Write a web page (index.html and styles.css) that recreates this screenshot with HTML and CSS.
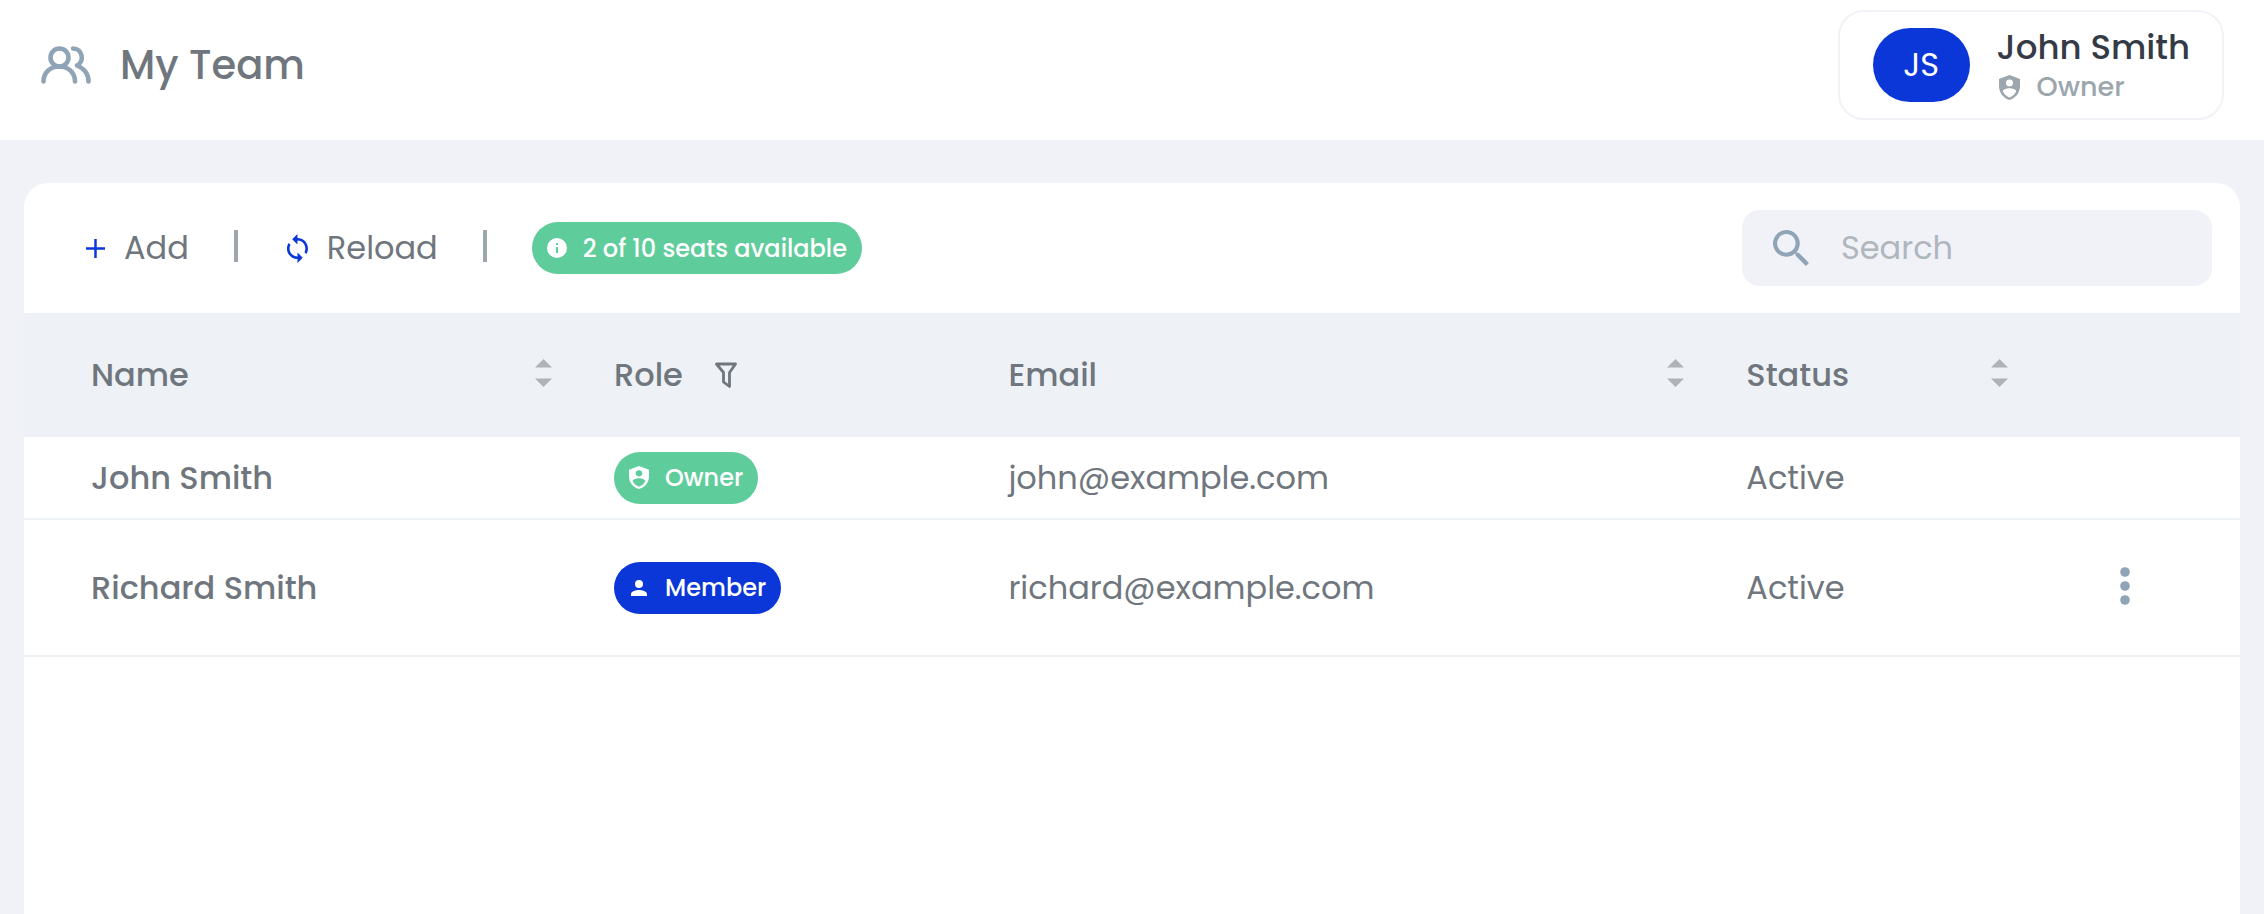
FILE: index.html
```html
<!DOCTYPE html>
<html lang="en">
<head>
<meta charset="utf-8">
<meta name="viewport" content="width=device-width, initial-scale=1">
<title>My Team</title>
<link rel="stylesheet" href="styles.css">
</head>
<body>
<svg class="sprite" aria-hidden="true">
  <symbol id="shield" viewBox="3 1 18 22" preserveAspectRatio="none"><path fill-rule="evenodd" d="M12 1 3 4.500v6.500c0 5.550 3.840 10.740 9 12 5.160-1.260 9-6.450 9-12V4.500Zm0 4a3 3 0 1 1 0 6 3 3 0 0 1 0-6Zm0 7.700c2.300 0 5.700 1 5.700 2.900-1.300 2.500-3.300 4.400-5.700 5.200-2.400-.8-4.400-2.700-5.700-5.200 0-1.900 3.400-2.900 5.700-2.900Z"/></symbol>
  <symbol id="sort" viewBox="0 0 17 28"><path d="M8.500 0 17 8.500H0ZM8.500 28 0 19.500h17Z"/></symbol>
</svg>
<header class="topbar">
  <div class="heading">
    <svg class="heading-icon" viewBox="0 0 50 38" fill="none" stroke="currentColor" stroke-width="4.600" stroke-linecap="round" stroke-linejoin="round"><circle cx="18.500" cy="11.500" r="9"/><path d="M2.500 35.500c0-20 31.500-20 31.500 0M32 2.500c9.500 0 12 13 4 17C42 22 47.500 27 47.500 35.500"/></svg>
    <h1 class="title">My Team</h1>
  </div>
  <button class="profile" type="button">
    <span class="avatar">JS</span>
    <span class="profile-text">
      <span class="profile-name">John Smith</span>
      <span class="profile-role"><svg class="profile-shield"><use href="#shield"/></svg>Owner</span>
    </span>
  </button>
</header>
<main class="content">
  <section class="panel">
    <div class="toolbar">
      <div class="actions">
        <button class="action" type="button"><svg class="plus" viewBox="0 0 20 20"><path d="M10 0v20M0 10h20" stroke="currentColor" stroke-width="2.600"/></svg>Add</button>
        <span class="divider"></span>
        <button class="action" type="button"><svg class="reload" viewBox="1 1 19 22"><path d="M12 4V1L8 5l4 4V6c3.310 0 6 2.690 6 6 0 1.010-.25 1.970-.7 2.800l1.460 1.460C19.540 15.030 20 13.570 20 12c0-4.420-3.580-8-8-8zm0 14c-3.310 0-6-2.690-6-6 0-1.010.25-1.970.7-2.800L5.240 7.740C4.460 8.970 4 10.430 4 12c0 4.420 3.580 8 8 8v3l4-4-4-4v3z"/></svg>Reload</button>
        <span class="divider"></span>
        <span class="badge badge-green"><svg class="badge-icon" viewBox="2 2 20 20"><path fill-rule="evenodd" d="M12 2a10 10 0 1 0 0 20 10 10 0 0 0 0-20Zm-1 5h2v2h-2Zm0 4h2v6h-2Z"/></svg>2 of 10 seats available</span>
      </div>
      <label class="search">
        <svg class="search-icon" viewBox="3 3 17.500 17.500"><path d="M15.500 14h-.79l-.28-.27A6.470 6.470 0 0 0 16 9.500 6.500 6.500 0 1 0 9.500 16c1.610 0 3.090-.59 4.230-1.570l.27.28v.79l5 4.990L20.490 19zm-6 0C7.010 14 5 11.990 5 9.500S7.010 5 9.500 5 14 7.010 14 9.500 11.990 14 9.500 14z"/></svg>
        <input class="search-input" type="search" placeholder="Search" aria-label="Search">
      </label>
    </div>
    <table class="team">
      <colgroup><col class="c-name"><col class="c-role"><col class="c-email"><col class="c-status"><col></colgroup>
      <thead>
        <tr>
          <th><div class="head">Name<svg class="sort"><use href="#sort"/></svg></div></th>
          <th><div class="head head-filter">Role<svg class="filter" viewBox="0 0 22 26" fill="none" stroke="currentColor" stroke-width="2.800" stroke-linejoin="round"><path d="M1.500 2h19L14.500 10.500V24.500L8.500 20V10.500Z"/></svg></div></th>
          <th><div class="head">Email<svg class="sort"><use href="#sort"/></svg></div></th>
          <th><div class="head">Status<svg class="sort"><use href="#sort"/></svg></div></th>
          <th></th>
        </tr>
      </thead>
      <tbody>
        <tr>
          <td class="name">John Smith</td>
          <td><span class="badge badge-green"><svg class="badge-icon badge-shield"><use href="#shield"/></svg>Owner</span></td>
          <td>john@example.com</td>
          <td>Active</td>
          <td></td>
        </tr>
        <tr class="tall">
          <td class="name">Richard Smith</td>
          <td><span class="badge badge-blue"><svg class="badge-icon" viewBox="2 2 20 20"><path d="M12 12a4 4 0 1 0 0-8 4 4 0 0 0 0 8Zm0 2c-2.670 0-8 1.340-8 4v2h16v-2c0-2.660-5.330-4-8-4Z"/></svg>Member</span></td>
          <td>richard@example.com</td>
          <td>Active</td>
          <td><button class="menu" type="button" aria-label="More actions"><svg class="dots" viewBox="0 0 10 38"><circle cx="5" cy="5" r="4.800"/><circle cx="5" cy="19" r="4.800"/><circle cx="5" cy="33" r="4.800"/></svg></button></td>
        </tr>
      </tbody>
    </table>
  </section>
</main>
</body>
</html>
```
FILE: styles.css
```css
* { box-sizing: border-box; }
body {
  margin: 0;
  min-height: 100vh;
  display: flex;
  flex-direction: column;
  background: #f1f2f7;
  color: #6f767e;
  font-family: Poppins, Inter, sans-serif;
  font-size: 32px;
}
button {
  border: 0;
  padding: 0;
  background: none;
  font: inherit;
  color: inherit;
}
svg { flex: none; fill: currentColor; }
svg[fill="none"] { fill: none; }
.sprite { position: absolute; width: 0; height: 0; }

.topbar {
  display: flex;
  justify-content: space-between;
  align-items: flex-start;
  height: 140px;
  padding: 10px 40px 0 41px;
  background: #fff;
}
.heading { display: flex; align-items: center; gap: 29px; height: 110px; }
.heading-icon { width: 50px; height: 38px; color: #90a4b7; }
.title { margin: 0; font-size: 40px; font-weight: 500; }
.profile {
  display: flex;
  align-items: center;
  gap: 27px;
  height: 110px;
  padding: 0 32px 0 33px;
  border: 2px solid #f0f2f7;
  border-radius: 26px;
  text-align: left;
}
.avatar {
  display: grid;
  place-items: center;
  width: 97px;
  height: 74px;
  border-radius: 37px;
  background: #0b37d9;
  color: #fff;
  font-size: 32px;
}
.profile-text { display: flex; flex-direction: column; }
.profile-name { color: #343a46; font-size: 34px; font-weight: 500; line-height: 44px; }
.profile-role {
  display: flex;
  align-items: center;
  gap: 17px;
  padding-left: 2px;
  color: #9ba6ad;
  font-size: 27px;
  font-weight: 500;
  line-height: 36px;
}
.profile-shield { width: 21px; height: 25px; }

.content { flex: 1; display: flex; padding: 43px 24px 0; }
.panel {
  flex: 1;
  border-radius: 24px 24px 0 0;
  background: #fff;
}
.toolbar {
  display: flex;
  justify-content: space-between;
  align-items: center;
  height: 130px;
  padding: 0 28px 0 62px;
}
.actions { display: flex; align-items: center; gap: 45px; }
.action { display: flex; align-items: center; gap: 19px; }
.plus { width: 19px; height: 19px; color: #0b37d9; }
.reload { width: 25px; height: 29px; color: #0b37d9; }
.divider { width: 4px; height: 32px; margin-bottom: 4px; background: #9ba6ad; }
.badge {
  display: inline-flex;
  align-items: center;
  gap: 16px;
  height: 52px;
  padding: 0 15px;
  border-radius: 26px;
  color: #fff;
  font-size: 24px;
  font-weight: 500;
  vertical-align: middle;
}
.badge-green { background: #5fcc9c; }
.badge-blue { background: #0b37d9; }
.badge-icon { width: 20px; height: 20px; }
.badge-shield { height: 23px; }
.search {
  display: flex;
  align-items: center;
  gap: 32px;
  width: 470px;
  height: 76px;
  padding: 0 31px;
  border-radius: 18px;
  background: #f1f2f8;
}
.search-icon { width: 36px; height: 36px; color: #90a4b7; }
.search-input {
  flex: 1;
  min-width: 0;
  border: 0;
  padding: 0;
  outline: 0;
  background: none;
  color: #6f767e;
  font: inherit;
}
.search-input::placeholder { color: #afb6bd; }

.team { width: 100%; table-layout: fixed; border-spacing: 0; }
.c-name { width: 25%; }
.c-role { width: 17.8%; }
.c-email { width: 33.3%; }
.c-status { width: 14.6%; }
th { height: 124px; padding: 0 26px 0 36px; background: #eef1f6; font-weight: 500; text-align: left; }
td { height: 83px; padding: 0 0 0 36px; border-bottom: 2px solid #eef2f7; }
.tall td { height: 137px; }
th:first-child, td:first-child { padding-left: 67px; }
.head { display: flex; align-items: center; justify-content: space-between; }
.head-filter { justify-content: flex-start; gap: 32px; }
.sort { width: 17px; height: 28px; margin-bottom: 4px; color: #aeb3b8; }
.filter { width: 22px; height: 26px; }
.name { font-weight: 500; }
.menu { display: block; padding: 0 50px 4px; }
.dots { display: block; width: 10px; height: 38px; color: #90a4b7; }
```
